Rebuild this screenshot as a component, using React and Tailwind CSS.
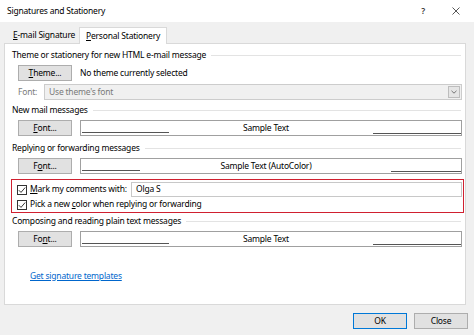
import React from "react";

const font = { fontFamily: '"Noto Sans", "Open Sans", sans-serif', letterSpacing: "-0.2px" };

function U({ children }) {
  return <span className="underline underline-offset-1">{children}</span>;
}

function Btn({ children, primary }) {
  return (
    <div
      className={`flex h-[16px] w-[54px] shrink-0 items-center justify-center bg-[#e1e1e1] text-[8.5px] leading-none text-black ${
        primary ? "border border-[#0078d7]" : "border border-[#adadad]"
      }`}
    >
      {children}
    </div>
  );
}

function Section({ title }) {
  return (
    <div className="flex h-[12px] items-center gap-[5px] pr-[1px]">
      <span className="whitespace-nowrap text-[8.5px] leading-none">{title}</span>
      <div className="h-px flex-1 bg-[#e3e3e3]" />
    </div>
  );
}

function Sample({ text, leftLine, rightLine }) {
  return (
    <div className="relative flex h-[16px] flex-1 items-center justify-center border border-[#a0a0a0] bg-white text-[8.5px] leading-none">
      <span className="pr-[10px]">{text}</span>
      <span className="absolute bottom-[2px] left-[1px] h-px bg-[#555]" style={{ width: leftLine }} />
      <span className="absolute bottom-[1px] right-0 h-px bg-[#555]" style={{ width: rightLine }} />
    </div>
  );
}

function Check({ children }) {
  return (
    <div className="flex items-center gap-[3px]">
      <div className="flex h-[10px] w-[10px] items-center justify-center border border-[#333] bg-white">
        <svg width="8" height="8" viewBox="0 0 8 8" fill="none">
          <path d="M0.8 4.2 L3 6.4 L7.2 1.5" stroke="#222" strokeWidth="0.9" />
        </svg>
      </div>
      <span className="whitespace-nowrap text-[8.5px] leading-none">{children}</span>
    </div>
  );
}

export default function App() {
  return (
    <div className="flex h-[335px] w-[474px] flex-col overflow-hidden bg-[#f0f0f0] text-black" style={font}>
      <div className="flex h-[22px] shrink-0 items-center bg-white pl-[7px] pr-[14px] text-[8.5px] leading-none">
        <span className="flex-1">Signatures and Stationery</span>
        <span className="mr-[27px] text-[8.5px] font-semibold text-[#333]">?</span>
        <svg width="8" height="8" viewBox="0 0 8 8" stroke="#444" strokeWidth="0.9">
          <path d="M0.5 0.5 L7.5 7.5 M7.5 0.5 L0.5 7.5" />
        </svg>
      </div>

      <div className="flex h-[21px] shrink-0 items-end pl-[10px]">
        <div className="flex h-[15px] w-[69px] items-center pl-[3px] text-[8.5px] leading-none">
          <U>E</U>-mail Signature
        </div>
        <div className="relative z-10 -mb-px flex h-[17px] items-center border border-b-0 border-[#d9d9d9] bg-white px-[6px] text-[8.5px] leading-none">
          <U>P</U>ersonal Stationery
        </div>
      </div>

      <div className="ml-[4px] mr-[8px] flex h-[262px] shrink-0 flex-col border border-[#d9d9d9] bg-white pl-[7px] pr-[3px] pt-[5px]">
        <Section title="Theme or stationery for new HTML e-mail message" />
        <div className="mt-[4px] flex items-center pl-[6px]">
          <Btn>
            <U>T</U>heme...
          </Btn>
          <span className="ml-[8px] text-[8.5px] leading-none">No theme currently selected</span>
        </div>
        <div className="mt-[3px] flex items-center pl-[6px]">
          <span className="w-[26px] text-[8.5px] leading-none text-[#7a7a7a]">Font:</span>
          <div className="flex h-[16px] flex-1 items-center border border-[#cccccc] bg-[#f0f0f0] pl-[4px]">
            <span className="flex-1 text-[8.5px] leading-none text-[#7a7a7a]">Use theme's font</span>
            <div className="mr-px flex h-[12px] w-[12px] items-center justify-center border border-[#bdbdbd] bg-[#e5e5e5]">
              <svg width="6" height="4" viewBox="0 0 6 4" fill="none" stroke="#666" strokeWidth="0.9">
                <path d="M0.5 0.8 L3 3.2 L5.5 0.8" />
              </svg>
            </div>
          </div>
        </div>

        <div className="mt-[4px]">
          <Section title="New mail messages" />
        </div>
        <div className="mt-[4px] flex items-center gap-[8px] pl-[6px]">
          <Btn>
            <U>F</U>ont...
          </Btn>
          <Sample text="Sample Text" leftLine={87} rightLine={88} />
        </div>

        <div className="mt-[6px]">
          <Section title="Replying or forwarding messages" />
        </div>
        <div className="mt-[4px] flex items-center gap-[8px] pl-[6px]">
          <Btn>
            F<U>o</U>nt...
          </Btn>
          <Sample text="Sample Text (AutoColor)" leftLine={58} rightLine={70} />
        </div>

        <div className="mt-[5px] ml-[-1px] mr-[-2px] flex h-[34px] flex-col border-[1.5px] border-[#d02030] pl-[5px] pr-[1px] pt-[2px]">
          <div className="flex h-[15px] items-center">
            <div className="w-[114px]">
              <Check>
                <U>M</U>ark my comments with:
              </Check>
            </div>
            <div className="flex h-[15px] flex-1 items-center border border-[#c8c8c8] bg-white pl-[4px] text-[8.5px] leading-none">
              Olga S
            </div>
          </div>
          <div className="mt-[1px] flex h-[13px] items-center">
            <Check>
              Pick a new <U>c</U>olor when replying or forwarding
            </Check>
          </div>
        </div>

        <div className="mt-[2px]">
          <Section title="Composing and reading plain text messages" />
        </div>
        <div className="mt-[4px] flex items-center gap-[8px] pl-[6px]">
          <Btn>
            Fo<U>n</U>t...
          </Btn>
          <Sample text="Sample Text" leftLine={87} rightLine={88} />
        </div>

        <div className="mt-[23px] flex h-[12px] items-center pl-[18px]">
          <span className="text-[8.5px] leading-none text-[#0066cc] underline underline-offset-1">
            Get signature templates
          </span>
        </div>
      </div>

      <div className="mt-[8px] flex justify-end gap-[7px] pr-[6px]">
        <Btn primary>OK</Btn>
        <Btn>Close</Btn>
      </div>
    </div>
  );
}
